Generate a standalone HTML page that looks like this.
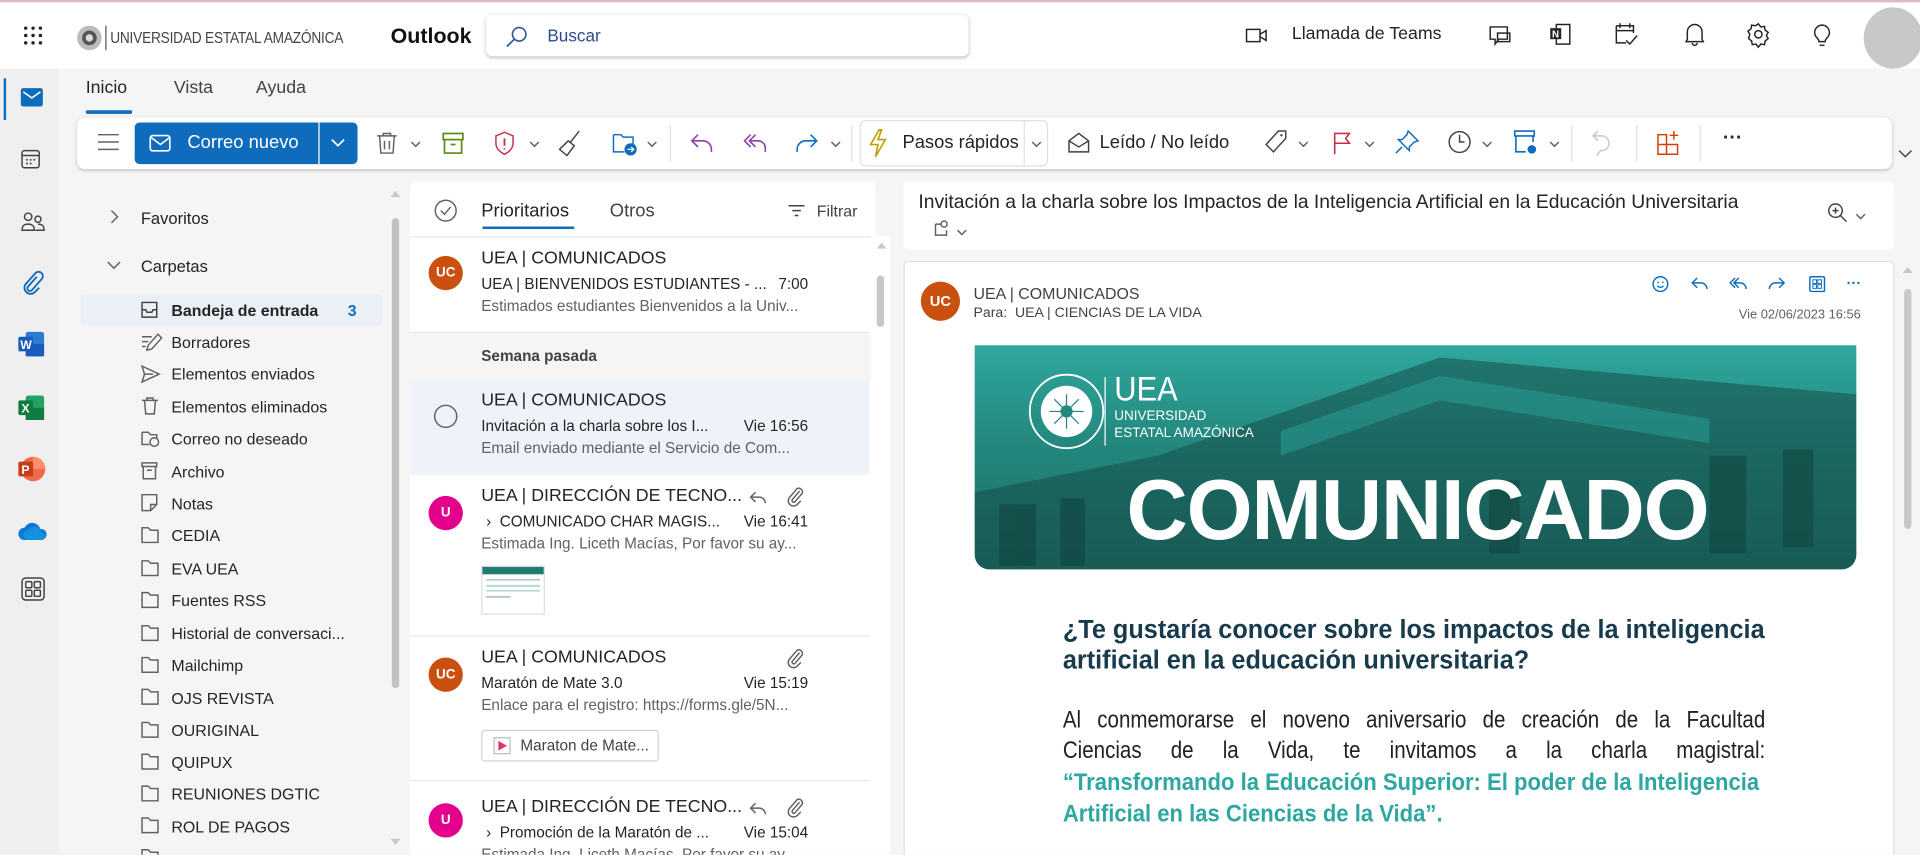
<!DOCTYPE html>
<html><head><meta charset="utf-8"><style>
*{box-sizing:border-box;margin:0;padding:0}
html,body{width:1920px;height:855px;overflow:hidden;background:#f5f5f5}
#w{position:absolute;left:0;top:0;width:1568px;height:698px;transform:scale(1.22449);transform-origin:0 0;font-family:"Liberation Sans",sans-serif;color:#242424;background:#f5f5f5;overflow:hidden}
.a{position:absolute;white-space:nowrap}
svg{position:absolute;overflow:visible}
.ic{fill:none}
.ic:not([stroke]){stroke:#424242}
.ic:not([stroke-width]){stroke-width:1.2}
.fi{position:absolute;left:140px;font-size:13px;color:#242424}
.fic{position:absolute;left:115px;width:15px;height:13px}
.msg{position:absolute;left:335px;width:375px;background:#fff;border-bottom:1px solid #e6e6e6}
.av{position:absolute;left:15px;width:28px;height:28px;border-radius:50%;color:#fff;font-size:11px;font-weight:bold;text-align:center;line-height:28px}
.f1{position:absolute;left:58px;font-size:14.5px;color:#242424}
.f2{position:absolute;left:58px;font-size:12.5px;color:#242424}
.f3{position:absolute;left:58px;font-size:12.5px;color:#616161}
.tm{position:absolute;right:50px;font-size:12.5px;color:#242424}
.pl{position:absolute;left:868px;width:667px;transform:scaleX(.86);transform-origin:0 0;font-size:19.5px;color:#222;white-space:nowrap}
.j{text-align:justify;text-align-last:justify}
</style></head><body><div id="w">
<div class="a" style="left:0;top:0;width:1568px;height:2px;background:#e3b8c6"></div>
<!-- header -->
<div class="a" style="left:0;top:2px;width:1568px;height:54px;background:#fff"></div>
<svg style="left:19px;top:21px" width="16" height="16"><g fill="#242424"><circle cx="2" cy="2" r="1.4"/><circle cx="8" cy="2" r="1.4"/><circle cx="14" cy="2" r="1.4"/><circle cx="2" cy="8" r="1.4"/><circle cx="8" cy="8" r="1.4"/><circle cx="14" cy="8" r="1.4"/><circle cx="2" cy="14" r="1.4"/><circle cx="8" cy="14" r="1.4"/><circle cx="14" cy="14" r="1.4"/></g></svg>
<svg style="left:62px;top:20px" width="22" height="22"><circle cx="11" cy="11" r="10" fill="#bbb"/><circle cx="11" cy="11" r="6" fill="#555"/><circle cx="11" cy="11" r="3" fill="#ddd"/></svg>
<div class="a" style="left:86px;top:21px;width:1px;height:20px;background:#555"></div>
<div class="a" style="left:90px;top:23px;font-size:13px;color:#444;transform:scaleX(.86);transform-origin:0 0;letter-spacing:-.2px">UNIVERSIDAD ESTATAL AMAZÓNICA</div>
<div class="a" style="left:319px;top:19px;font-size:17.5px;font-weight:bold;color:#111">Outlook</div>
<div class="a" style="left:397px;top:12px;width:394px;height:34px;background:#fff;border-radius:5px;box-shadow:0 1px 3px rgba(0,0,0,.25)"></div>
<svg style="left:413px;top:21px" width="18" height="18"><circle cx="11" cy="7" r="5.5" fill="none" stroke="#2b5797" stroke-width="1.3"/><path d="M7 11L1 17" stroke="#2b5797" stroke-width="1.4"/></svg>
<div class="a" style="left:447px;top:21px;font-size:14px;color:#2b4e8a">Buscar</div>
<svg style="left:1017px;top:22px" width="18" height="14"><rect x="1" y="2" width="11" height="10" class="ic" stroke="#242424"/><path d="M12 6l5-3v8l-5-3" class="ic" stroke="#242424"/></svg>
<div class="a" style="left:1055px;top:20px;font-size:14.5px;color:#242424">Llamada de Teams</div>
<svg style="left:1215px;top:19px" width="20" height="20"><path d="M2 3h14v10H9l-3 4v-4H2z" class="ic" stroke="#242424"/><rect x="8" y="8" width="10" height="7" class="ic" stroke="#242424"/></svg>
<svg style="left:1265px;top:18px" width="20" height="20"><rect x="6" y="2" width="11" height="16" class="ic" stroke="#242424"/><rect x="1" y="5" width="9" height="9" fill="#242424"/><text x="2.5" y="12.5" font-size="8" fill="#fff" font-family="Liberation Sans" font-weight="bold">N</text></svg>
<svg style="left:1318px;top:17px" width="20" height="22"><path d="M2 4h14v6M2 4v14h8M2 8h14" class="ic" stroke="#242424"/><path d="M5 2v4M13 2v4M10 16l3 3 6-7" class="ic" stroke="#242424"/></svg>
<svg style="left:1375px;top:18px" width="18" height="20"><path d="M3 14V8a6 6 0 0112 0v6l1 2H2zM7 17a2 2 0 004 0" class="ic" stroke="#242424"/></svg>
<svg style="left:1426px;top:18px" width="20" height="20"><circle cx="10" cy="10" r="3" class="ic" stroke="#242424"/><path d="M10 1.5l2 2.5 3-.5.5 3 2.5 2-1.5 2.5 1.5 2.5-2.5 2-.5 3-3-.5-2 2.5-2-2.5-3 .5-.5-3-2.5-2L3 10 1.5 7.5 4 5.5l.5-3 3 .5z" class="ic" stroke="#242424"/></svg>
<svg style="left:1480px;top:18px" width="16" height="22"><path d="M4 13a6 6 0 118 0c-1 1-1.5 2-1.5 3h-5c0-1-.5-2-1.5-3zM6 19h4" class="ic" stroke="#242424"/></svg>
<div class="a" style="left:1522px;top:6px;width:48px;height:50px;border-radius:50%;background:#c8c8c8"></div>
<!-- left rail -->
<div class="a" style="left:0;top:56px;width:48px;height:642px;background:#efefef"></div>
<div class="a" style="left:3px;top:64px;width:2px;height:34px;background:#0f6cbd"></div>
<svg style="left:17px;top:72px" width="18" height="16"><rect x="0" y="0" width="18" height="15" rx="2" fill="#0f6cbd"/><path d="M2 3l7 5 7-5" stroke="#fff" stroke-width="1.3" fill="none"/></svg>
<svg style="left:17px;top:122px" width="16" height="16"><rect x="1" y="1" width="14" height="14" rx="2" class="ic"/><path d="M1 5h14" class="ic"/><g fill="#424242"><circle cx="5" cy="8.5" r=".8"/><circle cx="8" cy="8.5" r=".8"/><circle cx="11" cy="8.5" r=".8"/><circle cx="5" cy="11.5" r=".8"/><circle cx="8" cy="11.5" r=".8"/></g></svg>
<svg style="left:17px;top:173px" width="20" height="16"><circle cx="6" cy="4" r="3" class="ic"/><circle cx="14" cy="6" r="2.5" class="ic"/><path d="M1 15c0-4 2-5 5-5s5 1 5 5zM12 15h7c0-3-1-5-5-5" class="ic"/></svg>
<svg style="left:18px;top:221px" width="16" height="20"><path d="M12 5l-7 8a2 2 0 003 3l8-9a3.5 3.5 0 00-5-5L3 11a5 5 0 007 7l4-4" fill="none" stroke="#0f6cbd" stroke-width="1.5"/></svg>
<svg style="left:15px;top:270px" width="22" height="22"><rect x="6" y="1" width="15" height="20" rx="2" fill="#2b7cd3"/><rect x="6" y="11" width="15" height="10" fill="#185abd"/><rect x="0" y="5" width="12" height="12" rx="1.5" fill="#185abd"/><text x="1.5" y="15" font-size="10" font-weight="bold" fill="#fff" font-family="Liberation Sans">W</text></svg>
<svg style="left:15px;top:322px" width="22" height="22"><rect x="6" y="1" width="15" height="20" rx="2" fill="#21a366"/><rect x="6" y="11" width="15" height="10" fill="#107c41"/><rect x="0" y="5" width="12" height="12" rx="1.5" fill="#107c41"/><text x="2.5" y="15" font-size="10" font-weight="bold" fill="#fff" font-family="Liberation Sans">X</text></svg>
<svg style="left:15px;top:372px" width="22" height="22"><circle cx="12" cy="11" r="10" fill="#ed6c47"/><path d="M12 1a10 10 0 0110 10H12z" fill="#ff8f6b"/><rect x="0" y="5" width="12" height="12" rx="1.5" fill="#c43e1c"/><text x="2.5" y="15" font-size="10" font-weight="bold" fill="#fff" font-family="Liberation Sans">P</text></svg>
<svg style="left:15px;top:426px" width="24" height="16"><path d="M5 15a5 5 0 010-10 7 7 0 0113 1 4.5 4.5 0 011 9z" fill="#0f78d4"/><path d="M8 15a4 4 0 010-8 6 6 0 0111 2 3 3 0 010 6z" fill="#1490df"/></svg>
<svg style="left:17px;top:471px" width="20" height="20"><rect x="1" y="1" width="18" height="18" rx="3" class="ic"/><rect x="4" y="4" width="5" height="5" rx="1" class="ic"/><rect x="11" y="4" width="5" height="5" rx="1" class="ic"/><rect x="4" y="11" width="5" height="5" rx="1" class="ic"/><rect x="11" y="11" width="5" height="5" rx="1" class="ic"/></svg>
<!-- tabs -->
<div class="a" style="left:70px;top:64px;font-size:14.5px;color:#242424">Inicio</div>
<div class="a" style="left:70px;top:90px;width:38px;height:3px;border-radius:2px;background:#0f6cbd"></div>
<div class="a" style="left:142px;top:64px;font-size:14.5px;color:#424242">Vista</div>
<div class="a" style="left:209px;top:64px;font-size:14.5px;color:#424242">Ayuda</div>
<!-- ribbon -->
<div class="a" style="left:63px;top:96px;width:1482px;height:42px;background:#fff;border-radius:6px;box-shadow:0 1px 3px rgba(0,0,0,.2)"></div>
<svg style="left:80px;top:109px" width="18" height="14"><path d="M0 1h17M0 7h17M0 13h17" class="ic" stroke="#616161"/></svg>
<div class="a" style="left:110px;top:100px;width:182px;height:34px;border-radius:4px;background:#0f6cbd"></div>
<div class="a" style="left:260px;top:100px;width:1px;height:34px;background:#fff"></div>
<svg style="left:122px;top:110px" width="18" height="14"><rect x="0.7" y="0.7" width="16" height="12.5" rx="2" fill="none" stroke="#fff" stroke-width="1.3"/><path d="M1 2l8 6 8-6" fill="none" stroke="#fff" stroke-width="1.3"/></svg>
<div class="a" style="left:153px;top:108px;font-size:15px;color:#fff">Correo nuevo</div>
<svg style="left:270px;top:113px" width="12" height="8"><path d="M1 1l5 5 5-5" fill="none" stroke="#fff" stroke-width="1.4"/></svg>
<svg style="left:307px;top:107px" width="18" height="20"><path d="M1 4h16M6 4V2h6v2M3 4l1 14h10l1-14M7 8v7M11 8v7" class="ic" stroke="#616161"/></svg>
<svg style="left:335px;top:115px" width="9" height="6"><path d="M1 1l3.5 3.5L8 1" class="ic" stroke="#616161"/></svg>
<svg style="left:361px;top:108px" width="18" height="18"><rect x="1" y="1" width="16" height="5" class="ic" stroke="#5c8a12" stroke-width="1.4"/><path d="M2 6v11h14V6M7 10h4" class="ic" stroke="#5c8a12" stroke-width="1.4"/></svg>
<svg style="left:403px;top:107px" width="18" height="20"><path d="M9 1l7 3v6c0 4-3 7-7 9-4-2-7-5-7-9V4z" class="ic" stroke="#c4314b"/><path d="M9 6v6M9 14v1" class="ic" stroke="#c4314b" stroke-width="1.5"/></svg>
<svg style="left:432px;top:115px" width="9" height="6"><path d="M1 1l3.5 3.5L8 1" class="ic" stroke="#616161"/></svg>
<svg style="left:455px;top:106px" width="20" height="22"><path d="M18 1l-7 9M9 9l5 4-6 8-6-5z" class="ic" stroke="#424242"/></svg>
<svg style="left:500px;top:107px" width="22" height="22"><path d="M1 3h6l2 2h8v6M1 3v14h9" class="ic" stroke="#0f6cbd"/><circle cx="15" cy="15" r="5" fill="#0f6cbd"/><path d="M12.5 15h5M15.5 13l2 2-2 2" stroke="#fff" fill="none"/></svg>
<svg style="left:528px;top:115px" width="9" height="6"><path d="M1 1l3.5 3.5L8 1" class="ic" stroke="#616161"/></svg>
<div class="a" style="left:547px;top:102px;width:1px;height:30px;background:#e0e0e0"></div>
<svg style="left:564px;top:109px" width="18" height="16"><path d="M6 1L1 6l5 5M1 6h9a7 7 0 017 7v2" class="ic" stroke="#8b3fae" stroke-width="1.3"/></svg>
<svg style="left:607px;top:109px" width="20" height="16"><path d="M6 1L1 6l5 5M10 1L5 6l5 5M5 6h7a6 6 0 016 6v3" class="ic" stroke="#8b3fae" stroke-width="1.3"/></svg>
<svg style="left:650px;top:109px" width="18" height="16"><path d="M12 1l5 5-5 5M17 6H8a7 7 0 00-7 7v2" class="ic" stroke="#0f6cbd" stroke-width="1.3"/></svg>
<svg style="left:678px;top:115px" width="9" height="6"><path d="M1 1l3.5 3.5L8 1" class="ic" stroke="#616161"/></svg>
<div class="a" style="left:695px;top:102px;width:1px;height:30px;background:#e0e0e0"></div>
<div class="a" style="left:702px;top:98px;width:154px;height:38px;border:1px solid #e0e0e0;border-radius:5px"></div>
<div class="a" style="left:836px;top:99px;width:1px;height:36px;background:#e0e0e0"></div>
<svg style="left:709px;top:105px" width="16" height="24"><path d="M9 1L2 13h6l-2 10 8-14H8l3-8z" class="ic" stroke="#c19c00" stroke-width="1.3"/></svg>
<div class="a" style="left:737px;top:108px;font-size:15px;color:#242424">Pasos rápidos</div>
<svg style="left:842px;top:115px" width="9" height="6"><path d="M1 1l3.5 3.5L8 1" class="ic" stroke="#616161"/></svg>
<svg style="left:872px;top:108px" width="18" height="17"><path d="M1 7l8-6 8 6v9H1zM1 7l8 5 8-5" class="ic" stroke="#424242"/></svg>
<div class="a" style="left:898px;top:108px;font-size:15px;color:#242424">Leído / No leído</div>
<svg style="left:1032px;top:106px" width="20" height="20"><path d="M12 1h6v6L8 18 2 12z" class="ic" stroke="#424242"/><circle cx="14.5" cy="4.5" r="1" fill="#424242"/></svg>
<svg style="left:1060px;top:115px" width="9" height="6"><path d="M1 1l3.5 3.5L8 1" class="ic" stroke="#616161"/></svg>
<svg style="left:1088px;top:107px" width="16" height="20"><path d="M2 19V2h12l-3 4 3 4H2" class="ic" stroke="#c4314b" stroke-width="1.3"/></svg>
<svg style="left:1114px;top:115px" width="9" height="6"><path d="M1 1l3.5 3.5L8 1" class="ic" stroke="#616161"/></svg>
<svg style="left:1139px;top:106px" width="20" height="20"><path d="M11 1l8 8-3 1-4 4 0 3-9-9 3 0 4-4zM6 14l-5 5" class="ic" stroke="#0f6cbd" stroke-width="1.2"/></svg>
<svg style="left:1182px;top:106px" width="20" height="20"><circle cx="10" cy="10" r="8.5" class="ic" stroke="#424242"/><path d="M10 4v6h4" class="ic" stroke="#424242"/></svg>
<svg style="left:1210px;top:115px" width="9" height="6"><path d="M1 1l3.5 3.5L8 1" class="ic" stroke="#616161"/></svg>
<svg style="left:1236px;top:106px" width="22" height="22"><path d="M1 1h16v4H1zM2 5v13h8M16 5v5" class="ic" stroke="#0f6cbd" stroke-width="1.3"/><circle cx="15" cy="16" r="3.5" fill="#0f6cbd"/></svg>
<svg style="left:1265px;top:115px" width="9" height="6"><path d="M1 1l3.5 3.5L8 1" class="ic" stroke="#616161"/></svg>
<div class="a" style="left:1283px;top:102px;width:1px;height:30px;background:#e0e0e0"></div>
<svg style="left:1300px;top:106px" width="18" height="22"><path d="M5 1L1 5l4 4M1 5h7a6 6 0 010 12H7l-3 4" class="ic" stroke="#c8c8c8"/></svg>
<div class="a" style="left:1336px;top:102px;width:1px;height:30px;background:#e0e0e0"></div>
<svg style="left:1353px;top:106px" width="20" height="22"><path d="M1 4h7v16H1zM8 12h9v8H8zM1 12h7M14 1v7M10.5 4.5h7" class="ic" stroke="#d83b01" stroke-width="1.2"/></svg>
<div class="a" style="left:1388px;top:102px;width:1px;height:30px;background:#e0e0e0"></div>
<div class="a" style="left:1407px;top:104px;font-size:16px;color:#242424;font-weight:bold">···</div>
<svg style="left:1550px;top:122px" width="12" height="8"><path d="M1 1l5 5 5-5" class="ic" stroke="#424242"/></svg>
<!-- folder pane -->
<svg style="left:90px;top:171px" width="8" height="12"><path d="M1 1l5 5-5 5" class="ic" stroke="#616161"/></svg>
<div class="a" style="left:115px;top:171px;font-size:13.5px">Favoritos</div>
<svg style="left:87px;top:213px" width="12" height="8"><path d="M1 1l5 5 5-5" class="ic" stroke="#616161"/></svg>
<div class="a" style="left:115px;top:210px;font-size:13.5px">Carpetas</div>
<div class="a" style="left:66px;top:240px;width:246px;height:26px;background:#ebf0f7;border-radius:3px"></div>
<svg class="fic" style="top:246px" width="15" height="14"><path d="M1 1h12v12H1zM1 7h3l1 2h4l1-2h3" class="ic"/></svg>
<div class="fi" style="top:246px;font-weight:bold">Bandeja de entrada</div>
<div class="a" style="left:284px;top:246px;font-size:13px;color:#0f6cbd;font-weight:bold">3</div>
<svg class="fic" style="top:272px" width="16" height="15"><path d="M1 3h8M1 7h5M1 11h3M14 1l-8 9-1 4 4-1 8-9z" class="ic" stroke="#616161"/></svg><div class="fi" style="top:272px">Borradores</div>
<svg class="fic" style="top:298px" width="16" height="15"><path d="M1 1l14 6.5L1 14l2-6.5zM3 7.5h7" class="ic" stroke="#616161"/></svg><div class="fi" style="top:298px">Elementos enviados</div>
<svg class="fic" style="top:324px" width="16" height="15"><path d="M1 3h13M5 3V1h5v2M3 3l1 11h7l1-11" class="ic" stroke="#616161"/></svg><div class="fi" style="top:325px">Elementos eliminados</div>
<svg class="fic" style="top:350px" width="16" height="15"><path d="M1 3h5l2 2h5v3M1 3v10h6" class="ic" stroke="#616161"/><circle cx="11" cy="11" r="3.5" class="ic" stroke="#616161"/></svg><div class="fi" style="top:351px">Correo no deseado</div>
<svg class="fic" style="top:377px" width="16" height="15"><path d="M1 1h12v3H1zM2 4v10h10V4M5 7h4" class="ic" stroke="#616161"/></svg><div class="fi" style="top:378px">Archivo</div>
<svg class="fic" style="top:403px" width="16" height="15"><path d="M1 1h12v8l-5 5H1zM8 14v-5h5" class="ic" stroke="#616161"/></svg><div class="fi" style="top:404px">Notas</div>
<svg class="fic" style="top:429px" width="16" height="15"><path d="M1 2h5l2 2h6v10H1z" class="ic" stroke="#616161"/></svg><div class="fi" style="top:430px">CEDIA</div>
<svg class="fic" style="top:456px" width="16" height="15"><path d="M1 2h5l2 2h6v10H1z" class="ic" stroke="#616161"/></svg><div class="fi" style="top:457px">EVA UEA</div>
<svg class="fic" style="top:482px" width="16" height="15"><path d="M1 2h5l2 2h6v10H1z" class="ic" stroke="#616161"/></svg><div class="fi" style="top:483px">Fuentes RSS</div>
<svg class="fic" style="top:509px" width="16" height="15"><path d="M1 2h5l2 2h6v10H1z" class="ic" stroke="#616161"/></svg><div class="fi" style="top:510px">Historial de conversaci...</div>
<svg class="fic" style="top:535px" width="16" height="15"><path d="M1 2h5l2 2h6v10H1z" class="ic" stroke="#616161"/></svg><div class="fi" style="top:536px">Mailchimp</div>
<svg class="fic" style="top:561px" width="16" height="15"><path d="M1 2h5l2 2h6v10H1z" class="ic" stroke="#616161"/></svg><div class="fi" style="top:563px">OJS REVISTA</div>
<svg class="fic" style="top:588px" width="16" height="15"><path d="M1 2h5l2 2h6v10H1z" class="ic" stroke="#616161"/></svg><div class="fi" style="top:589px">OURIGINAL</div>
<svg class="fic" style="top:614px" width="16" height="15"><path d="M1 2h5l2 2h6v10H1z" class="ic" stroke="#616161"/></svg><div class="fi" style="top:615px">QUIPUX</div>
<svg class="fic" style="top:640px" width="16" height="15"><path d="M1 2h5l2 2h6v10H1z" class="ic" stroke="#616161"/></svg><div class="fi" style="top:641px">REUNIONES DGTIC</div>
<svg class="fic" style="top:666px" width="16" height="15"><path d="M1 2h5l2 2h6v10H1z" class="ic" stroke="#616161"/></svg><div class="fi" style="top:668px">ROL DE PAGOS</div>
<svg class="fic" style="top:692px" width="16" height="15"><path d="M1 2h5l2 2h6v10H1z" class="ic" stroke="#616161"/></svg>
<div class="a" style="left:320px;top:178px;width:6px;height:384px;border-radius:3px;background:#c2c2c2"></div>
<svg style="left:319px;top:156px" width="8" height="5"><path d="M0 5l4-5 4 5z" fill="#c8c8c8"/></svg>
<svg style="left:319px;top:685px" width="8" height="5"><path d="M0 0l4 5 4-5z" fill="#c8c8c8"/></svg>
<!-- message list -->
<div class="a" style="left:335px;top:148px;width:380px;height:550px;background:#fff;border-radius:4px 4px 0 0"></div>
<svg style="left:354px;top:162px" width="20" height="20"><circle cx="10" cy="10" r="8.5" class="ic" stroke="#616161"/><path d="M6 10l3 3 5-6" class="ic" stroke="#616161"/></svg>
<div class="a" style="left:393px;top:164px;font-size:15px;color:#242424">Prioritarios</div>
<div class="a" style="left:394px;top:185px;width:75px;height:2px;background:#0f6cbd"></div>
<div class="a" style="left:498px;top:164px;font-size:15px;color:#424242">Otros</div>
<svg style="left:644px;top:167px" width="14" height="11"><path d="M0 1h13M3 5h7M5 9h3" class="ic" stroke="#424242"/></svg>
<div class="a" style="left:667px;top:165px;font-size:13px;color:#424242">Filtrar</div>
<div class="a" style="left:335px;top:193px;width:380px;height:1px;background:#e6e6e6"></div>
<div class="a" style="left:711px;top:193px;width:16px;height:505px;background:#fff"></div>
<div class="a" style="left:716px;top:225px;width:6px;height:42px;border-radius:3px;background:#c8c8c8"></div>
<svg style="left:716px;top:198px" width="8" height="5"><path d="M0 5l4-5 4 5z" fill="#c8c8c8"/></svg>
<!-- msg1 -->
<div class="msg" style="top:194px;height:78px">
<div class="av" style="top:15px;background:#ca5010">UC</div>
<div class="f1" style="top:9px">UEA | COMUNICADOS</div>
<div class="f2" style="top:31px">UEA | BIENVENIDOS ESTUDIANTES - ...</div>
<div class="tm" style="top:31px">7:00</div>
<div class="f3" style="top:49px">Estimados estudiantes Bienvenidos a la Univ...</div>
</div>
<div class="a" style="left:335px;top:272px;width:376px;height:38px;background:#f5f5f5"></div>
<div class="a" style="left:393px;top:284px;font-size:12.5px;font-weight:bold;color:#424242">Semana pasada</div>
<!-- msg2 -->
<div class="msg" style="top:310px;height:78px;background:#eef3f9;border:none">
<svg style="position:absolute;left:19px;top:20px" width="20" height="20"><circle cx="10" cy="10" r="9" class="ic" stroke="#616161"/></svg>
<div class="f1" style="top:9px">UEA | COMUNICADOS</div>
<div class="f2" style="top:31px">Invitación a la charla sobre los I...</div>
<div class="tm" style="top:31px">Vie 16:56</div>
<div class="f3" style="top:49px">Email enviado mediante el Servicio de Com...</div>
</div>
<!-- msg3 -->
<div class="msg" style="top:388px;height:132px">
<div class="av" style="top:17px;background:#e3008c">U</div>
<div class="f1" style="top:9px">UEA | DIRECCIÓN DE TECNO...</div>
<svg style="position:absolute;left:277px;top:13px" width="14" height="11"><path d="M5 1L1 5l4 4M1 5h7a5 5 0 015 5" class="ic" stroke="#616161"/></svg>
<svg style="position:absolute;left:308px;top:10px" width="14" height="16"><path d="M10 3l-6 7a1.5 1.5 0 002 2l6-7a3 3 0 00-4-4L2 8a4 4 0 006 6l3-3" class="ic" stroke="#616161"/></svg>
<div class="f2" style="top:31px;left:62px">›&nbsp;&nbsp;COMUNICADO CHAR MAGIS...</div>
<div class="tm" style="top:31px">Vie 16:41</div>
<div class="f3" style="top:49px">Estimada Ing. Liceth Macías, Por favor su ay...</div>
<div style="position:absolute;left:58px;top:74px;width:52px;height:40px;border:1px solid #ddd;background:#fff">
<div style="height:6px;background:#1e7c70"></div>
<div style="margin:4px 3px;height:1px;background:#9bb"></div><div style="margin:3px 3px;height:1px;background:#9bb"></div><div style="margin:3px 3px;height:1px;background:#9cc"></div><div style="margin:4px 3px;width:20px;height:1px;background:#8aa"></div></div>
</div>
<!-- msg4 -->
<div class="msg" style="top:520px;height:118px">
<div class="av" style="top:17px;background:#ca5010">UC</div>
<div class="f1" style="top:9px">UEA | COMUNICADOS</div>
<svg style="position:absolute;left:308px;top:10px" width="14" height="16"><path d="M10 3l-6 7a1.5 1.5 0 002 2l6-7a3 3 0 00-4-4L2 8a4 4 0 006 6l3-3" class="ic" stroke="#616161"/></svg>
<div class="f2" style="top:31px">Maratón de Mate 3.0</div>
<div class="tm" style="top:31px">Vie 15:19</div>
<div class="f3" style="top:49px">Enlace para el registro: https://forms.gle/5N...</div>
<div style="position:absolute;left:58px;top:76px;width:145px;height:26px;border:1px solid #d1d1d1;border-radius:3px"></div>
<div style="position:absolute;left:68px;top:82px;width:14px;height:14px;border:1px solid #bbb"></div>
<svg style="position:absolute;left:72px;top:85px" width="7" height="8"><path d="M0 0l7 4-7 4z" fill="#e3316b"/></svg>
<div class="f2" style="top:82px;left:90px;color:#424242">Maraton de Mate...</div>
</div>
<!-- msg5 -->
<div class="msg" style="top:638px;height:60px;border:none">
<div class="av" style="top:18px;background:#e3008c">U</div>
<div class="f1" style="top:13px">UEA | DIRECCIÓN DE TECNO...</div>
<svg style="position:absolute;left:277px;top:17px" width="14" height="11"><path d="M5 1L1 5l4 4M1 5h7a5 5 0 015 5" class="ic" stroke="#616161"/></svg>
<svg style="position:absolute;left:308px;top:14px" width="14" height="16"><path d="M10 3l-6 7a1.5 1.5 0 002 2l6-7a3 3 0 00-4-4L2 8a4 4 0 006 6l3-3" class="ic" stroke="#616161"/></svg>
<div class="f2" style="top:35px;left:62px">›&nbsp;&nbsp;Promoción de la Maratón de ...</div>
<div class="tm" style="top:35px">Vie 15:04</div>
<div class="f3" style="top:53px">Estimada Ing. Liceth Macías, Por favor su ay...</div>
</div>
<!-- reading pane -->
<div class="a" style="left:738px;top:148px;width:809px;height:56px;background:#fff;border-radius:4px"></div>
<div class="a" style="left:750px;top:157px;font-size:15.75px;color:#242424">Invitación a la charla sobre los Impactos de la Inteligencia Artificial en la Educación Universitaria</div>
<svg style="left:763px;top:180px" width="12" height="13"><path d="M1 3h5M1 3v9h9V8" class="ic" stroke="#616161"/><circle cx="8" cy="3" r="2.5" class="ic" stroke="#616161"/></svg>
<svg style="left:781px;top:187px" width="9" height="6"><path d="M1 1l3.5 3.5L8 1" class="ic" stroke="#616161"/></svg>
<svg style="left:1492px;top:165px" width="18" height="18"><circle cx="7" cy="7" r="5.5" class="ic" stroke="#424242"/><path d="M11 11l5 5M7 4.5v5M4.5 7h5" class="ic" stroke="#424242"/></svg>
<svg style="left:1515px;top:174px" width="9" height="6"><path d="M1 1l3.5 3.5L8 1" class="ic" stroke="#616161"/></svg>
<div class="a" style="left:738px;top:213px;width:809px;height:490px;background:#fff;border:1px solid #e0e0e0;border-radius:4px"></div>
<div class="a" style="left:752px;top:230px;width:32px;height:32px;border-radius:50%;background:#ca5010;color:#fff;font-size:12px;font-weight:bold;text-align:center;line-height:32px">UC</div>
<div class="a" style="left:795px;top:232px;font-size:13px;color:#424242">UEA | COMUNICADOS</div>
<div class="a" style="left:795px;top:250px;font-size:11.5px;color:#424242">Para:&nbsp; UEA | CIENCIAS DE LA VIDA</div>
<div class="a" style="left:1420px;top:251px;font-size:10.5px;color:#616161">Vie 02/06/2023 16:56</div>
<svg style="left:1349px;top:225px" width="14" height="14"><circle cx="7" cy="7" r="6" class="ic" stroke="#0f6cbd"/><path d="M4.5 8.5c1.5 1.5 3.5 1.5 5 0" class="ic" stroke="#0f6cbd"/><circle cx="5" cy="5.5" r=".7" fill="#0f6cbd"/><circle cx="9" cy="5.5" r=".7" fill="#0f6cbd"/></svg>
<svg style="left:1381px;top:226px" width="14" height="12"><path d="M5 1L1 5l4 4M1 5h7a5 5 0 015 5" class="ic" stroke="#0f6cbd"/></svg>
<svg style="left:1412px;top:226px" width="16" height="12"><path d="M5 1L1 5l4 4M8 1L4 5l4 4M4 5h5a5 5 0 015 5" class="ic" stroke="#0f6cbd"/></svg>
<svg style="left:1444px;top:226px" width="14" height="12"><path d="M9 1l4 4-4 4M13 5H6a5 5 0 00-5 5" class="ic" stroke="#0f6cbd"/></svg>
<svg style="left:1477px;top:225px" width="14" height="14"><rect x="1" y="1" width="12" height="12" rx="1" class="ic" stroke="#0f6cbd"/><rect x="3.5" y="3.5" width="3" height="3" class="ic" stroke="#0f6cbd" stroke-width=".8"/><rect x="7.5" y="3.5" width="3" height="3" class="ic" stroke="#0f6cbd" stroke-width=".8"/><rect x="3.5" y="7.5" width="3" height="3" class="ic" stroke="#0f6cbd" stroke-width=".8"/><rect x="7.5" y="7.5" width="3" height="3" class="ic" stroke="#0f6cbd" stroke-width=".8"/></svg>
<div class="a" style="left:1508px;top:224px;font-size:12px;color:#0f6cbd;font-weight:bold">···</div>
<!-- banner -->
<div class="a" style="left:796px;top:282px;width:720px;height:183px;border-radius:0 0 12px 12px;overflow:hidden;background:linear-gradient(180deg,#2fa89d 0%,#23877d 45%,#1d6c64 100%)">
<svg style="left:0;top:0" width="720" height="183"><g fill="#164f4a" opacity=".55"><path d="M150 90L380 10 720 40V183H0V120z"/></g><g fill="#2aa197" opacity=".5"><path d="M250 70L380 25 600 60 600 80 380 45 250 90z"/></g><g fill="#0f3f3a" opacity=".5"><rect x="420" y="110" width="25" height="60"/><rect x="600" y="90" width="30" height="80"/><rect x="660" y="85" width="25" height="80"/><rect x="20" y="130" width="30" height="50"/><rect x="70" y="125" width="20" height="55"/></g></svg>
<svg style="left:40px;top:22px" width="70" height="64"><circle cx="35" cy="32" r="30" fill="none" stroke="#fff" stroke-width="1.5"/><circle cx="35" cy="32" r="21" fill="#fff"/><g stroke="#23877d" stroke-width="1"><path d="M35 18v28M21 32h28M25 22l20 20M45 22L25 42"/></g><circle cx="35" cy="32" r="5" fill="#23877d"/></svg>
<div class="a" style="left:106px;top:26px;width:1px;height:56px;background:#fff"></div>
<div class="a" style="left:114px;top:20px;font-size:28px;color:#fff;transform:scaleX(.9);transform-origin:0 0">UEA</div>
<div class="a" style="left:114px;top:52px;font-size:11px;color:#fff">UNIVERSIDAD</div>
<div class="a" style="left:114px;top:66px;font-size:11px;color:#fff">ESTATAL AMAZÓNICA</div>
<div class="a" style="left:124px;top:94px;font-size:70px;font-weight:bold;color:#fff;letter-spacing:-1px;transform:scaleX(.99);transform-origin:0 0">COMUNICADO</div>
</div>
<div class="pl" style="top:502px;font-size:21.5px;font-weight:bold;color:#173b4d;transform:scaleX(.96);width:600px" >¿Te gustaría conocer sobre los impactos de la inteligencia</div>
<div class="pl" style="top:527px;font-size:21.5px;font-weight:bold;color:#173b4d;transform:scaleX(.96);width:600px">artificial en la educación universitaria?</div>
<div class="pl j" style="top:577px">Al conmemorarse el noveno aniversario de creación de la Facultad</div>
<div class="pl j" style="top:602px">Ciencias de la Vida, te invitamos a la charla magistral:</div>
<div class="pl" style="top:628px;font-weight:bold;color:#2ea7a1;transform:scaleX(.924)">“Transformando la Educación Superior: El poder de la Inteligencia</div>
<div class="pl" style="top:654px;font-weight:bold;color:#2ea7a1;transform:scaleX(.924)">Artificial en las Ciencias de la Vida”.</div>
<div class="a" style="left:1555px;top:236px;width:6px;height:196px;border-radius:3px;background:#c8c8c8"></div>
<svg style="left:1554px;top:218px" width="8" height="5"><path d="M0 5l4-5 4 5z" fill="#c8c8c8"/></svg>
</div></body></html>
